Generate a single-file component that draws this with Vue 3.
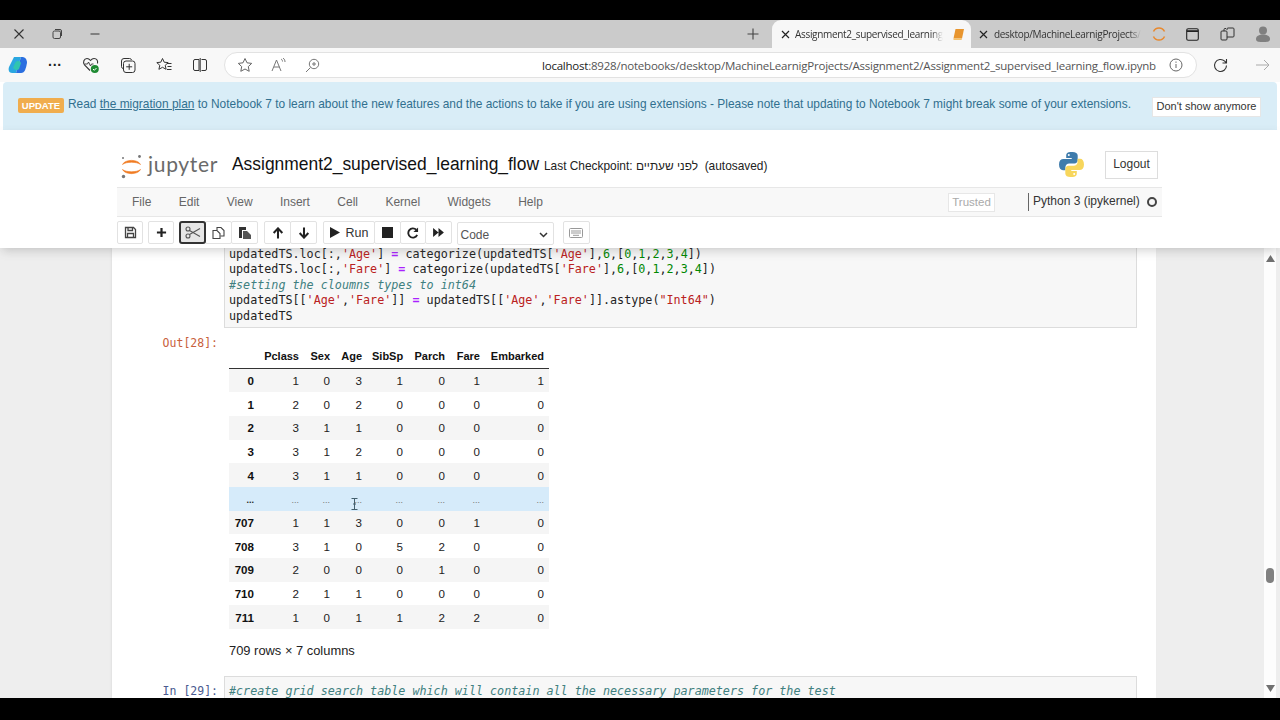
<script setup>
const menus = ['File','Edit','View','Insert','Cell','Kernel','Widgets','Help']
const cols = ['Pclass','Sex','Age','SibSp','Parch','Fare','Embarked']
const rows = [
  ['0',1,0,3,1,0,1,1],['1',2,0,2,0,0,0,0],['2',3,1,1,0,0,0,0],['3',3,1,2,0,0,0,0],['4',3,1,1,0,0,0,0],
  ['...','...','...','...','...','...','...','...'],
  ['707',1,1,3,0,0,1,0],['708',3,1,0,5,2,0,0],['709',2,0,0,0,1,0,0],['710',2,1,1,0,0,0,0],['711',1,0,1,1,2,2,0]
]
</script>

<template>
  <div class="page">
    <div class="black top"></div>

    <div class="tabstrip">
      <div class="winctl">
        <svg width="12" height="12" viewBox="0 0 12 12"><path d="M1.500 1.500l9 9M10.500 1.500l-9 9" stroke="#333" stroke-width="1.100" fill="none"/></svg>
        <svg width="12" height="12" viewBox="0 0 12 12"><rect x="2" y="3" width="7.500" height="7.500" rx="1.500" stroke="#444" fill="none"/><path d="M4 1.500h5a1.500 1.500 0 0 1 1.500 1.500v5" stroke="#444" fill="none"/></svg>
        <svg width="12" height="12" viewBox="0 0 12 12"><path d="M1.500 6h9" stroke="#444" stroke-width="1.100"/></svg>
      </div>
      <svg class="plus" width="12" height="12" viewBox="0 0 12 12"><path d="M6 .5v11M.5 6h11" stroke="#444" stroke-width="1.100"/></svg>
      <div class="tab active">
        <svg width="9" height="9" viewBox="0 0 9 9"><path d="M1 1l7 7M8 1l-7 7" stroke="#222" stroke-width="1.200"/></svg>
        <span class="tabtitle">Assignment2_supervised_learning</span>
        <svg width="13" height="13" viewBox="0 0 13 13"><path d="M3.500 1h8.500l-2 9.500H1.500z" fill="#e8952e"/><path d="M1.500 10.500h8.500l-.4 1.500H1.500z" fill="#f6c26d"/></svg>
      </div>
      <div class="tab">
        <svg width="9" height="9" viewBox="0 0 9 9"><path d="M1 1l7 7M8 1l-7 7" stroke="#222" stroke-width="1.200"/></svg>
        <span class="tabtitle second">desktop/MachineLearnigProjects/</span>
        <svg width="14" height="14" viewBox="0 0 14 14" fill="none"><path d="M1.500 4.500A6 6 0 0 1 12.500 4.500" stroke="#e8892e" stroke-width="1.500"/><path d="M1.500 9.500A6 6 0 0 0 12.500 9.500" stroke="#e8892e" stroke-width="1.500"/></svg>
      </div>
      <div class="tabright">
        <svg width="13" height="13" viewBox="0 0 13 13" fill="none"><rect x=".7" y=".7" width="11.600" height="11.600" rx="1.500" stroke="#222" stroke-width="1.100"/><path d="M1 2.200h11v1.800H1z" fill="#222"/></svg>
        <svg width="15" height="14" viewBox="0 0 15 14" fill="none" stroke="#333"><rect x="1" y="4" width="6" height="9" rx="1"/><path d="M4 4V2.500A1 1 0 0 1 5 1.500h1M7 3V2a1 1 0 0 1 1-1h5a1 1 0 0 1 1 1v7a1 1 0 0 1-1 1H7"/></svg>
        <svg width="14" height="16" viewBox="0 0 14 16"><circle cx="7" cy="4.500" r="4" fill="#808080"/><path d="M0 13c0-3 3-4.500 7-4.500s7 1.500 7 4.500-3 3-7 3-7 0-7-3z" fill="#808080"/></svg>
      </div>
    </div>

    <div class="addressbar">
      <div class="leftic">
        <svg width="20" height="20" viewBox="0 0 20 20"><path d="M6 2h7l-5 16H4C1 18 0 15 1 12z" fill="#2aa7e0"/><path d="M14 2c3 0 5 2 5 6-1 5-2 10-6 10H8l5-16z" fill="#2b6fe0"/><path d="M7 8c2-3 5-2 6 0l-2 6c-2 2-4 1-6-1z" fill="#30c5b0"/></svg>
        <span class="dots">···</span>
        <svg width="18" height="18" viewBox="0 0 18 18" fill="none"><path d="M8 14.500L2.500 9C.5 6.500 2 2.500 5 2.500c1.500 0 2.500.8 3.500 2 1-1.200 2-2 3.500-2 3 0 4 2.500 3.500 5" stroke="#333" stroke-width="1.100"/><path d="M2.500 8h3l1-2 2 4 1-2h2" stroke="#333" stroke-width=".9"/><circle cx="12.800" cy="13" r="4" fill="#1e8a32"/><path d="M11 13l1.300 1.300 2.200-2.300" stroke="#fff"/></svg>
        <svg width="16" height="16" viewBox="0 0 16 16" fill="none" stroke="#333"><path d="M3 11.500A2 2 0 0 1 1.500 9.500V4A2.500 2.500 0 0 1 4 1.500h5.500A2 2 0 0 1 11.500 3"/><rect x="3.500" y="4" width="11.500" height="11.500" rx="2.500"/><path d="M9.200 6.800v6M6.200 9.800h6"/></svg>
        <svg width="16" height="16" viewBox="0 0 16 16" fill="none" stroke="#333"><path d="M6.500 1.500l1.700 3.700 4 .4-3 2.700.9 4-3.600-2-3.600 2 .9-4-3-2.700 4-.4z"/><path d="M11 6.500h4.500M11.500 9.500h4M11 12.500h4.500"/></svg>
        <svg width="16" height="16" viewBox="0 0 16 16" fill="none" stroke="#333"><path d="M7 2.500H3a1.500 1.500 0 0 0-1.500 1.500v8A1.500 1.500 0 0 0 3 13.500h4zM9.500 2.500H13A1.500 1.500 0 0 1 14.500 4v8a1.500 1.500 0 0 1-1.500 1.500H9.500M8.200 1v14"/></svg>
      </div>
      <div class="urlpill">
        <div class="pillic">
          <svg width="16" height="16" viewBox="0 0 16 16" fill="none" stroke="#666"><path d="M8 1.500l2 4.300 4.700.6-3.400 3.200.9 4.700L8 12l-4.200 2.300.9-4.700L1.300 6.400 6 5.800z"/></svg>
          <svg width="16" height="14" viewBox="0 0 16 14" fill="none" stroke="#777"><path d="M1 13L5.500 2 10 13M3 9h5.500"/><path d="M10 1c1 .5 1.500 1.500 1.500 2.500M12 0c1.500 1 2 2.500 2 4"/></svg>
          <svg width="15" height="15" viewBox="0 0 15 15" fill="none" stroke="#777"><circle cx="9" cy="6" r="4.700"/><path d="M5.500 9.500L1 14M9 4v4M7 6h4"/></svg>
        </div>
        <span class="url"><b>localhost</b>:8928/notebooks/desktop/MachineLearnigProjects/Assignment2/Assignment2_supervised_learning_flow.ipynb</span>
        <svg class="info" width="14" height="14" viewBox="0 0 14 14" fill="none" stroke="#666"><circle cx="7" cy="7" r="6"/><path d="M7 6v4M7 3.500v1.300"/></svg>
      </div>
      <svg class="reload" width="15" height="15" viewBox="0 0 15 15" fill="none" stroke="#333" stroke-width="1.100"><path d="M13.500 7.500a6 6 0 1 1-1.800-4.300L13.500 5M13.500 1v4h-4"/></svg>
      <svg class="forward" width="14" height="12" viewBox="0 0 14 12" fill="none" stroke="#aaa"><path d="M0 6h13M8 1l5 5-5 5"/></svg>
    </div>

    <div class="banner">
      <span class="badge">UPDATE</span>
      <span class="bannertext">Read <u>the migration plan</u> to Notebook 7 to learn about the new features and the actions to take if you are using extensions - Please note that updating to Notebook 7 might break some of your extensions.</span>
      <span class="dismiss">Don't show anymore</span>
    </div>

    <header class="nbhead">
      <div class="titlerow">
        <svg class="jlogo" width="22" height="27" viewBox="0 0 22 27" fill="none">
          <path d="M1.500 11.500C4 6 17 6 19.500 11.500 16 8.500 5 8.500 1.500 11.500z" fill="#f07b22" stroke="#f07b22" stroke-width=".6"/>
          <path d="M1.500 16.500C4 22 17 22 19.500 16.500 16 19.500 5 19.500 1.500 16.500z" fill="#f07b22" stroke="#f07b22" stroke-width=".6"/>
          <circle cx="18.500" cy="3.500" r="1.400" fill="#767677"/><circle cx="2.500" cy="23.500" r="1.700" fill="#767677"/><circle cx="2" cy="5" r="1" fill="#767677"/>
        </svg>
        <span class="jtext">jupyter</span>
        <span class="nbtitle">Assignment2_supervised_learning_flow</span>
        <span class="checkpoint">Last Checkpoint: <bdi>לפני שעתיים</bdi>&nbsp; (autosaved)</span>
        <svg class="pylogo" width="27" height="27" viewBox="0 0 24 24">
          <path d="M12 .8C8.300.8 7.300 2.200 7.300 4v2.300h4.900v.9H4.800C2.600 7.200.9 8.800.9 12.100s1.500 5 3.500 5h2.200v-2.800c0-2 1.600-3.300 3.400-3.300h4.700c1.600 0 2.800-1.200 2.800-2.800V4c0-2-1.900-3.200-4.500-3.200z" fill="#3f7cac"/>
          <circle cx="9.600" cy="3.600" r=".9" fill="#fff"/>
          <path d="M12 23.200c3.700 0 4.700-1.400 4.700-3.200v-2.300h-4.900v-.9h7.400c2.200 0 3.900-1.600 3.900-4.900s-1.500-5-3.500-5h-2.200v2.800c0 2-1.600 3.300-3.400 3.300H9.300c-1.600 0-2.800 1.200-2.800 2.800V20c0 2 1.900 3.200 4.500 3.200z" fill="#f7d65c"/>
          <circle cx="14.400" cy="20.400" r=".9" fill="#fff"/>
        </svg>
        <span class="logout">Logout</span>
      </div>
      <div class="menubar">
        <span v-for="m in menus" :key="m" class="menuitem">{{ m }}</span>
        <span class="trusted">Trusted</span>
        <span class="kernel">Python 3 (ipykernel)</span>
        <span class="kcircle"></span>
      </div>
      <div class="toolbar">
        <span class="btn"><svg width="13" height="13" viewBox="0 0 13 13" fill="none" stroke="#444" stroke-width="1.300"><path d="M1.500 1.500h8l2 2v8h-10z"/><path d="M4 1.500v3h4.500v-3M3.500 11.500v-4h6v4"/></svg></span>
        <span class="btn"><svg width="11" height="11" viewBox="0 0 12 12"><path d="M6 1v10M1 6h10" stroke="#222" stroke-width="2.400"/></svg></span>
        <div class="group">
          <span class="btn sel"><svg width="16" height="13" viewBox="0 0 16 13" fill="none" stroke="#555" stroke-width="1.100"><circle cx="3" cy="3" r="2"/><circle cx="3" cy="10" r="2"/><path d="M4.500 4.500L15 10.500M4.500 8.500L15 2.500"/></svg></span>
          <span class="btn"><svg width="13" height="14" viewBox="0 0 13 14" fill="none" stroke="#444" stroke-width="1.100"><path d="M5 4V1.500h4l3 3V10H8.500"/><path d="M1 4.500h4l3 3v5H1z"/></svg></span>
          <span class="btn"><svg width="14" height="14" viewBox="0 0 14 14"><path d="M1 1h7v3H4v8H1z" fill="#333"/><path d="M5 5h4l4 4v4H5z" fill="#555"/></svg></span>
        </div>
        <div class="group">
          <span class="btn"><svg width="12" height="12" viewBox="0 0 13 13"><path d="M6.500 1.500v11M1.800 6.500l4.700-5 4.700 5" fill="none" stroke="#222" stroke-width="2.200"/></svg></span>
          <span class="btn"><svg width="12" height="12" viewBox="0 0 13 13"><path d="M6.500 11.500v-11M1.800 6.500l4.700 5 4.700-5" fill="none" stroke="#222" stroke-width="2.200"/></svg></span>
        </div>
        <div class="group last3">
          <span class="btn run"><svg width="10" height="11" viewBox="0 0 10 11"><path d="M0 0l10 5.500L0 11z" fill="#222"/></svg>Run</span>
          <span class="btn"><svg width="11" height="11" viewBox="0 0 11 11"><rect width="11" height="11" fill="#222"/></svg></span>
          <span class="btn"><svg width="12" height="12" viewBox="0 0 13 13" fill="none" stroke="#222" stroke-width="2"><path d="M11 8.500A5 5 0 1 1 10 3"/><path d="M12 .5v5H7z" fill="#222" stroke="none"/></svg></span>
          <span class="btn"><svg width="11" height="9" viewBox="0 0 12 10"><path d="M0 0l6 5-6 5zM6 0l6 5-6 5z" fill="#222"/></svg></span>
        </div>
        <div class="select"><span>Code</span><svg width="9" height="6" viewBox="0 0 9 6" fill="none" stroke="#333" stroke-width="1.500"><path d="M1 1l3.500 3.500L8 1"/></svg></div>
        <span class="btn kbd"><svg width="14" height="10" viewBox="0 0 14 10"><rect x=".5" y=".5" width="13" height="9" rx="1" fill="none" stroke="#999"/><path d="M2 3h10M2 5h10M4 7.300h6" stroke="#999"/></svg></span>
      </div>
    </header>

    <main class="site">
      <div class="scrollarea">
        <div class="container">
          <div class="cell firstcell">
            <div class="prompt"></div>
            <pre class="code"><span>updatedTS.loc[:,<s>'Age'</s>] <i>=</i> categorize(updatedTS[<s>'Age'</s>],<em>6</em>,[<em>0</em>,<em>1</em>,<em>2</em>,<em>3</em>,<em>4</em>])</span>
<span>updatedTS.loc[:,<s>'Fare'</s>] <i>=</i> categorize(updatedTS[<s>'Fare'</s>],<em>6</em>,[<em>0</em>,<em>1</em>,<em>2</em>,<em>3</em>,<em>4</em>])</span>
<span class="comment">#setting the cloumns types to int64</span>
<span>updatedTS[[<s>'Age'</s>,<s>'Fare'</s>]] <i>=</i> updatedTS[[<s>'Age'</s>,<s>'Fare'</s>]].astype(<s>"Int64"</s>)</span>
<span>updatedTS</span></pre>
          </div>
          <div class="cell output">
            <div class="prompt out">Out[28]:</div>
            <div class="result">
              <table class="df">
                <thead>
                  <tr><th class="c0"></th><th v-for="(c, i) in cols" :key="c" :class="'c' + (i + 1)">{{ c }}</th></tr>
                </thead>
                <tbody>
                  <tr v-for="r in rows" :key="r[0]" :class="{ ell: r[0] === '...' }">
                    <th>{{ r[0] }}</th>
                    <td v-for="(v, i) in r.slice(1)" :key="i">{{ v }}</td>
                  </tr>
                </tbody>
              </table>
              <svg class="ibeam" width="7" height="12" viewBox="0 0 7 12" fill="none" stroke="#44606e"><path d="M.5.500h6M.5 11.500h6M3.500.500v11M2 6h3"/></svg>
              <p class="count">709 rows × 7 columns</p>
            </div>
          </div>
          <div class="cell">
            <div class="prompt in">In [29]:</div>
            <pre class="code last"><span class="comment">#create grid search table which will contain all the necessary parameters for the test</span></pre>
          </div>
        </div>
      </div>
      <aside class="scrollbar">
        <svg width="9" height="7" viewBox="0 0 9 7"><path d="M4.500 0L9 7H0z" fill="#707070"/></svg>
        <div class="track"><span class="thumb"></span></div>
        <svg width="9" height="7" viewBox="0 0 9 7"><path d="M4.500 7L0 0h9z" fill="#707070"/></svg>
      </aside>
    </main>

    <div class="black bottom"></div>
  </div>
</template>

<style>
html, body { margin: 0; padding: 0; overflow: hidden; }
</style>

<style scoped>
* { box-sizing: border-box; }
.page { width: 1280px; height: 720px; display: flex; flex-direction: column; overflow: hidden; font-family: "Liberation Sans", Arial, sans-serif; background: #fff; }
.black { background: #000; flex: none; }
.top { height: 20px; }
.bottom { height: 22px; }

.tabstrip { height: 28px; flex: none; background: #cbcbcb; display: flex; align-items: center; font-family: "Open Sans", "Noto Sans", sans-serif; }
.winctl { width: 88px; margin-left: 13px; display: flex; justify-content: space-between; flex: none; }
.plus { margin-left: 646px; flex: none; }
.tab { height: 28px; display: flex; align-items: center; padding-left: 9px; flex: none; }
.tab.active { width: 199px; margin-left: 13px; background: #f7f7f7; border-radius: 9px 9px 0 0; }
.tab:not(.active) { width: 196px; padding-left: 8px; }
.tabtitle { font-size: 10px; color: #333; margin-left: 5px; width: 148px; white-space: nowrap; overflow: hidden; letter-spacing: -.32px; -webkit-mask-image: linear-gradient(to right, #000 92%, transparent); mask-image: linear-gradient(to right, #000 92%, transparent); }
.tab.active svg:last-child { margin-left: 9px; }
.tab .second { margin-left: 6px; width: 147px; }
.tab:not(.active) svg:last-child { margin-left: 11px; }
.tabright { display: flex; align-items: center; margin-left: 19px; gap: 21px; flex: none; }

.addressbar { height: 34px; flex: none; background: #f8f8f8; display: flex; align-items: center; }
.leftic { width: 224px; padding-left: 8px; padding-right: 16px; display: flex; align-items: center; justify-content: space-between; flex: none; }
.dots { font-size: 14px; font-weight: 700; color: #222; }
.urlpill { width: 973px; height: 26px; background: #fff; border: 1px solid #e2e2e2; border-radius: 13px; display: flex; align-items: center; flex: none; padding-left: 12px; }
.pillic { display: flex; align-items: center; gap: 18px; width: 305px; flex: none; }
.url { font-family: "Open Sans", "Noto Sans", sans-serif; font-size: 11.500px; color: #555; white-space: nowrap; letter-spacing: -.22px; }
.url b { font-weight: 400; color: #222; }
.info { margin-left: 13px; flex: none; }
.reload { margin-left: 16px; flex: none; }
.forward { margin-left: 28px; flex: none; }

.banner { height: 48px; flex: none; margin: 0 3px; background: #d9edf7; border-radius: 4px 4px 0 0; display: flex; align-items: center; padding: 0 16px 2px 15px; color: #31708f; }
.badge { background: #f0ad4e; color: #fff; font-weight: 700; font-size: 9.500px; height: 15px; line-height: 15px; width: 46px; text-align: center; border-radius: 2px; flex: none; margin-top: 1px; }
.bannertext { font-size: 11.920px; margin-left: 4px; white-space: nowrap; flex: none; margin-top: -2px; }
.dismiss { margin-left: auto; background: #fff; border: 1px solid #e6e6e6; color: #333; font-size: 11px; width: 109px; height: 20px; line-height: 16px; text-align: center; white-space: nowrap; margin-top: 3px; }

.nbhead { flex: none; height: 118px; background: #fff; box-shadow: 0 4px 10px -2px rgba(87,87,87,.3); position: relative; z-index: 2; display: flex; flex-direction: column; }
.titlerow { height: 57px; display: flex; align-items: center; padding: 12px 0 0 121px; }
.jlogo { flex: none; margin-top: 3px; }
.jtext { font-family: "Lato", sans-serif; font-size: 21px; color: #6a6a6a; margin-left: 5px; letter-spacing: .7px; width: 84px; margin-top: -3px; }
.nbtitle { font-size: 17.430px; color: #111; white-space: nowrap; width: 312px; }
.checkpoint { font-size: 11.900px; color: #222; white-space: nowrap; width: 514px; margin-top: 3px; }
.pylogo { flex: none; }
.logout { width: 53px; height: 28px; margin-left: 20px; border: 1px solid #ddd; font-size: 12px; color: #333; text-align: center; line-height: 25px; background: #fff; }

.menubar { margin: 0 118px 0 117px; height: 30px; background: #f8f8f8; border-top: 1px solid #e7e7e7; border-bottom: 1px solid #e7e7e7; display: flex; align-items: center; padding-left: 1.300px; font-size: 12px; color: #666; }
.menuitem { padding: 0 13.700px; }
.trusted { margin-left: auto; border: 1px solid #e7e7e7; background: #fff; color: #aaa; font-size: 11.500px; width: 47px; height: 19px; line-height: 17px; text-align: center; }
.kernel { margin-left: 33px; border-left: 1px solid #666; padding-left: 4px; font-size: 12px; color: #333; height: 18px; line-height: 17px; width: 118px; white-space: nowrap; }
.kcircle { width: 10px; height: 10px; border: 2px solid #444; border-radius: 50%; margin-left: 1px; margin-right: 5px; }

.toolbar { margin-left: 117px; height: 31px; display: flex; align-items: flex-start; padding-top: 4px; gap: 5px; }
.group { display: flex; }
.group + .group { margin-left: 1px; }
.group .btn + .btn { margin-left: -1px; }
.btn { height: 23px; width: 26px; border: 1px solid #e2e2e2; border-radius: 2px; background: #fff; display: flex; align-items: center; justify-content: center; flex: none; }
.btn.sel { border: 2px solid #333; background: #e6e6e6; width: 27px; border-radius: 3px; position: relative; z-index: 1; }
.group .btn { width: 27px; }
.last3 .btn { width: 26.500px; }
.last3 .btn.run { width: 52px; gap: 6px; font-size: 12.500px; color: #333; }
.select { width: 97px; height: 23px; margin-top: 1px; border: 1px solid #e2e2e2; border-radius: 2px; display: flex; align-items: center; justify-content: space-between; padding: 2px 5px 0 3px; font-size: 12px; color: #555; background: #fff; }
.kbd { margin-left: 4px; width: 27px; }

.site { flex: 1; min-height: 0; display: flex; background: #eee; }
.scrollarea { width: 1264px; overflow: hidden; padding-left: 112px; }
.container { width: 1044px; height: 100%; background: #fff; padding: 0 19px 0 0; box-shadow: -1px 0 2px rgba(0,0,0,.06); overflow: hidden; }
.cell { display: flex; align-items: flex-start; }
.prompt { width: 112px; flex: none; font-family: "DejaVu Sans Mono", monospace; font-size: 11.500px; text-align: right; padding-right: 6px; line-height: 15.400px; }
.out { color: #c8603c; padding-top: 1px; }
.in { color: #4a5a90; padding-top: 8px; }
.code { margin: 0; flex: 1; background: #f7f7f7; border: 1px solid #dcdcdc; padding: 0 4px; font-family: "DejaVu Sans Mono", monospace; font-size: 11.720px; line-height: 15.430px; color: #222; white-space: pre; }
.firstcell { margin-top: -1px; }
.firstcell .code { border-top: 0; height: 81px; }
.output { margin-top: 7px; }
.code s { text-decoration: none; color: #ba2121; }
.code i { font-style: normal; color: #a2f; font-weight: 700; }
.code em { font-style: normal; color: #080; }
.comment { color: #408080; font-style: italic; }
.last { height: 40px; padding-top: 7px; }
.result { position: relative; padding-left: 5px; padding-top: 9px; font-size: 13px; }
.df { border-collapse: collapse; table-layout: fixed; width: 320px; font-size: 11.600px; color: #222; }
.df thead th { height: 24.600px; font-weight: 700; text-align: right; padding: 0 5px; border-bottom: 1px solid #333; white-space: nowrap; color: #111; font-size: 11px; }
.df .c0 { width: 30px; } .df .c1 { width: 45px; } .df .c2 { width: 31px; } .df .c3 { width: 32px; }
.df .c4 { width: 41px; } .df .c5 { width: 42px; } .df .c6 { width: 35px; } .df .c7 { width: 64px; }
.df tbody tr { height: 23.700px; }
.df tbody tr:nth-child(odd) { background: #f5f5f5; }
.df tbody tr.ell { background: #d6ebfa; font-size: 9px; color: #777; }
.df tbody tr.ell th, .df tbody tr.ell td { padding-top: 3px; }
.df tbody th { text-align: right; padding: 0 5px; font-weight: 700; color: #111; font-size: 11.600px; }
.df tbody tr.ell th { font-size: 9px; color: #222; }
.df td { text-align: right; padding: 0 5px; }
.ibeam { position: absolute; left: 127px; top: 163px; }
.count { margin: 13px 0 0; font-size: 12.900px; color: #222; line-height: 18px; height: 33.400px; }

.scrollbar { width: 12px; background: #fdfdfd; margin-right: 4px; display: flex; flex-direction: column; align-items: center; padding: 7px 0 6px; flex: none; }
.track { flex: 1; width: 100%; position: relative; }
.thumb { position: absolute; left: 2px; top: 306px; width: 8px; height: 15px; border-radius: 4px; background: #808080; }
</style>
